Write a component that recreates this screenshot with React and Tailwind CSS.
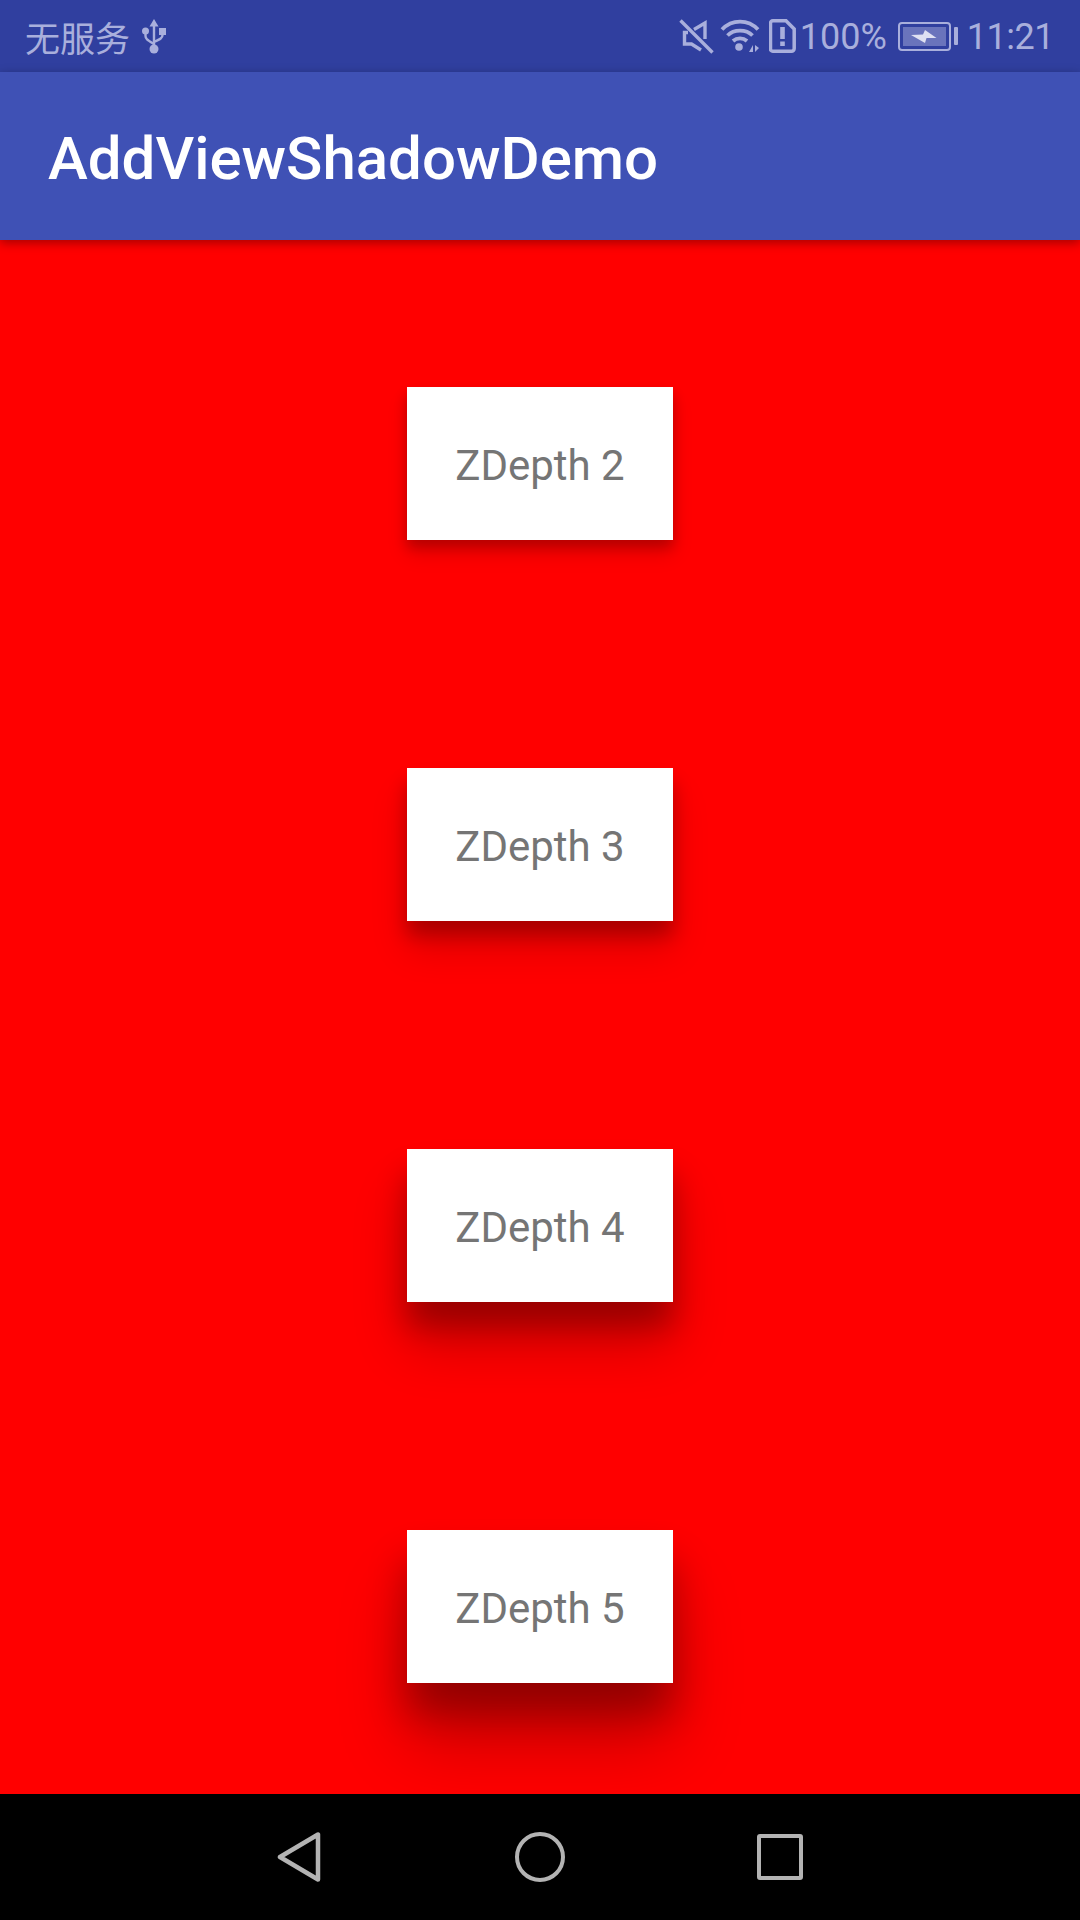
const CARDS = [
  { label: 'ZDepth 2', shadow: 'shadow-[0_14px_20px_rgba(0,0,0,0.12),0_7px_12px_rgba(0,0,0,0.2)]' },
  { label: 'ZDepth 3', shadow: 'shadow-[0_28px_36px_rgba(0,0,0,0.14),0_14px_18px_rgba(0,0,0,0.24)]' },
  { label: 'ZDepth 4', shadow: 'shadow-[0_44px_56px_rgba(0,0,0,0.2),0_24px_28px_rgba(0,0,0,0.26)]' },
  { label: 'ZDepth 5', shadow: 'shadow-[0_60px_70px_rgba(0,0,0,0.22),0_30px_36px_rgba(0,0,0,0.28)]' },
];

function StatusBar() {
  return (
    <div className="h-[72px] bg-[#303f9f] flex items-center justify-between pl-[25px] pr-[26px] text-[#a9afdc]">
      <div className="flex items-center">
        <span className="text-[35px] leading-none font-['Noto_Sans_CJK_SC',sans-serif]">无服务</span>
        <svg className="ml-[12px]" width="24" height="35" viewBox="0 0 24 35" fill="currentColor">
          <path d="M12 0l4.500 7.500h-9z" />
          <circle cx="12" cy="30" r="4.500" />
          <circle cx="3.500" cy="12" r="3.500" />
          <rect x="17" y="9" width="7" height="7" />
          <path d="M12 6v24M3.500 14v3c0 3 2 4 8.500 8M20.500 14v2c0 3-2 4-8.500 7" fill="none" stroke="currentColor" strokeWidth="2.400" />
        </svg>
      </div>
      <div className="flex items-center">
        <svg width="38" height="35" viewBox="0 0 36 35" fill="none" stroke="currentColor" strokeWidth="3.400">
          <path d="M15 10.500L26 4V20" />
          <path d="M9 13.500H5.500V25H12.500L22 31" />
          <path d="M1.500 1.500L33.500 33.500" />
        </svg>
        <svg className="ml-[4px]" width="41" height="34" viewBox="0 0 41 34" fill="none" stroke="currentColor" strokeWidth="3.800">
          <path d="M2 10.500C12 0 28 0 38 10.500" />
          <path d="M7.500 16.500C14 10 26 10 32.500 16.500" />
          <path d="M13 22C17 18.500 23 18.500 27 22" />
          <circle cx="19" cy="28" r="3.800" fill="currentColor" stroke="none" />
          <path d="M29 33l4-7v7zM35 26v7l4-4z" fill="currentColor" stroke="none" />
        </svg>
        <svg className="ml-[8px]" width="27" height="34" viewBox="0 0 27 34" fill="none">
          <path d="M3.800 1.800H17L25.200 10V29.500a2.700 2.700 0 0 1-2.700 2.700H3.800A2.300 2.300 0 0 1 1.500 29.500V4.100a2.300 2.300 0 0 1 2.300-2.300z" stroke="currentColor" strokeWidth="3.500" />
          <rect x="11.200" y="8" width="4.600" height="12" fill="currentColor" />
          <rect x="11.200" y="22.500" width="4.600" height="4.500" fill="currentColor" />
        </svg>
        <span className="ml-[4px] pt-[2px] text-[36px] leading-none font-['Roboto',sans-serif]">100%</span>
        <div className="ml-[11px] flex items-center">
          <div className="w-[53px] h-[29px] border-2 border-current rounded-[4px] p-[3px]">
            <div className="h-full bg-[#6a74bc] flex items-center justify-center">
              <svg width="26" height="13" viewBox="0 0 26 13" fill="#dfe1f2">
                <path d="M0 5L12 4.500L14 0L25.500 8L15.500 8L14 13Z" />
              </svg>
            </div>
          </div>
          <div className="w-[4px] h-[18px] ml-[3px] bg-current rounded-[1px]" />
        </div>
        <span className="ml-[9px] pt-[2px] text-[36px] leading-none tracking-[-0.5px] font-['Roboto',sans-serif]">11:21</span>
      </div>
    </div>
  );
}

function NavBar() {
  return (
    <div className="h-[126px] bg-black flex items-center justify-center text-[#b3b3b3]">
      <div className="w-[240px] flex justify-center">
        <svg width="46" height="50" viewBox="0 0 46 50" fill="none" stroke="currentColor" strokeWidth="4.500" strokeLinejoin="round">
          <path d="M3 25L41 2.500V47.500z" />
        </svg>
      </div>
      <div className="w-[240px] flex justify-center">
        <div className="w-[50px] h-[50px] rounded-full border-[4.500px] border-current" />
      </div>
      <div className="w-[240px] flex justify-center">
        <div className="w-[46px] h-[46px] rounded-[3px] border-[4.500px] border-current" />
      </div>
    </div>
  );
}

export default function App() {
  return (
    <div className="w-[1080px] h-[1920px] flex flex-col overflow-hidden bg-[#ff0000] font-['Roboto',sans-serif]">
      <StatusBar />
      {/* App bar */}
      <div className="relative z-10 h-[168px] bg-[#3f51b5] flex items-center pl-[48px] shadow-[0_3px_10px_rgba(0,0,0,0.35)]">
        <h1 className="pt-[5px] text-[60px] leading-none font-medium text-white">AddViewShadowDemo</h1>
      </div>

      <div className="flex-1 flex flex-col items-center pt-[147px] gap-[228px]">
        {CARDS.map(card => (
          <div key={card.label} className={`w-[266px] h-[153px] pt-[4px] bg-white flex items-center justify-center text-[42px] text-[#757575] ${card.shadow}`}>
            {card.label}
          </div>
        ))}
      </div>

      <NavBar />
    </div>
  );
}
